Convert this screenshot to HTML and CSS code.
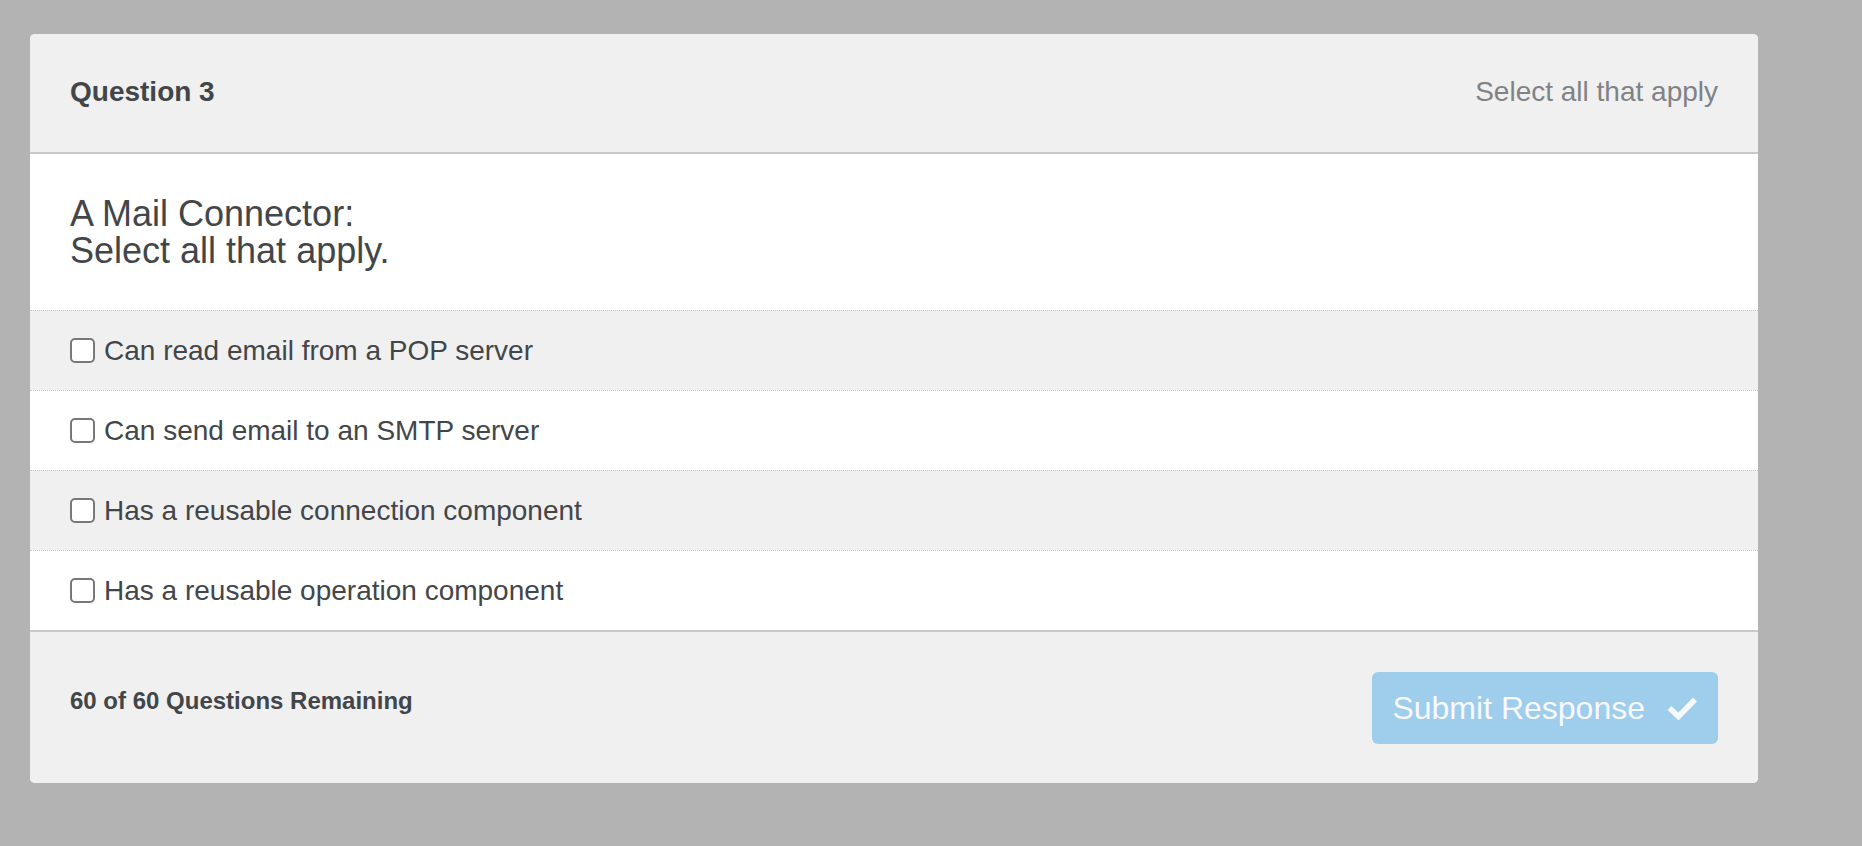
FILE: index.html
```html
<!DOCTYPE html>
<html lang="en">
<head>
    <meta charset="UTF-8">
    <meta name="viewport" content="width=device-width, initial-scale=1.0">
    <title>Question 3</title>
    <link rel="stylesheet" href="styles.css">
</head>
<body>
    <div class="question-card">
        <header class="card-header">
            <div class="question-number">Question 3</div>
            <div class="question-hint">Select all that apply</div>
        </header>
        <div class="question-text">
            A Mail Connector:<br>
            Select all that apply.
        </div>
        <ul class="options">
            <li class="option">
                <label><input type="checkbox" class="option-check"> Can read email from a POP server</label>
            </li>
            <li class="option">
                <label><input type="checkbox" class="option-check"> Can send email to an SMTP server</label>
            </li>
            <li class="option">
                <label><input type="checkbox" class="option-check"> Has a reusable connection component</label>
            </li>
            <li class="option">
                <label><input type="checkbox" class="option-check"> Has a reusable operation component</label>
            </li>
        </ul>
        <footer class="card-footer">
            <div class="remaining">60 of 60 Questions Remaining</div>
            <button class="submit-button" disabled>
                Submit Response
                <svg class="check-icon" viewBox="0 0 30 23" width="30" height="23">
                    <polyline points="2.5,11 11.5,19.5 28,2.5" fill="none" stroke="currentColor" stroke-width="5.5"/>
                </svg>
            </button>
        </footer>
    </div>
</body>
</html>
```

FILE: styles.css
```css
body {
    margin: 0;
    padding: 34px 104px 63px 30px;
    background-color: #b3b3b3;
    font-family: 'Liberation Sans', Arial, sans-serif;
    color: #434649;
}
.question-card {
    background-color: white;
    border-radius: 5px;
    overflow: hidden;
}
.card-header {
    background-color: #f0f0f0;
    border-bottom: 2px solid #c6cacd;
    display: flex;
    justify-content: space-between;
    align-items: center;
    padding: 39px 40px 41px;
    font-size: 28px;
    line-height: 38px;
}
.question-number {
    font-weight: bold;
}
.question-hint {
    color: #808285;
}
.question-text {
    padding: 41px 40px;
    font-size: 36px;
    line-height: 37px;
}
.options {
    list-style: none;
    margin: 0;
    padding: 0;
}
.option {
    border-top: 1px dotted #c4c7ca;
    height: 79px;
    display: flex;
    align-items: center;
    padding: 0 40px;
    font-size: 28px;
}
.option:nth-child(odd) {
    background-color: #f0f0f0;
}
.option label {
    display: flex;
    align-items: center;
    gap: 9px;
    cursor: pointer;
}
.option-check {
    appearance: none;
    -webkit-appearance: none;
    margin: 0;
    width: 25px;
    height: 25px;
    border: 2px solid #76787a;
    border-radius: 5px;
    background-color: white;
    box-sizing: border-box;
}
.card-footer {
    background-color: #f0f0f0;
    border-top: 2px solid #c6cacd;
    display: flex;
    justify-content: space-between;
    align-items: flex-start;
    padding: 40px 40px 39px;
}
.remaining {
    font-size: 24px;
    font-weight: bold;
    margin-top: 15px;
}
.submit-button {
    background-color: #9fcdec;
    color: #f7f9fb;
    border: none;
    border-radius: 6px;
    height: 72px;
    padding: 0 21px 0 20px;
    display: flex;
    align-items: center;
    gap: 22px;
    font-family: 'Liberation Sans', Arial, sans-serif;
    font-size: 32px;
}
.check-icon {
    display: block;
}
```
